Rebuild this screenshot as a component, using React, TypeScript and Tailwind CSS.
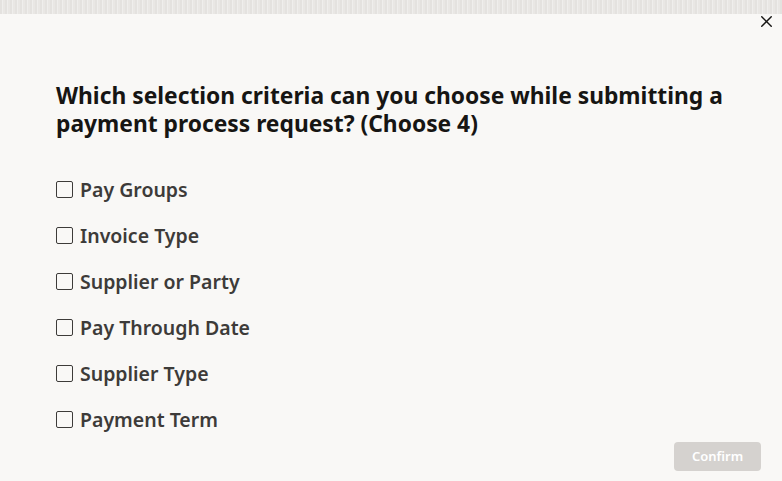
import { X } from 'lucide-react'

const options = ['Pay Groups', 'Invoice Type', 'Supplier or Party', 'Pay Through Date', 'Supplier Type', 'Payment Term']

export default function App() {
  return (
    <div className="w-[782px] h-[481px] bg-[#f9f8f6] flex flex-col overflow-hidden" style={{ fontFamily: '"Noto Sans", "Open Sans", sans-serif' }}>
      <div className="h-[14px] shrink-0 bg-[repeating-linear-gradient(90deg,#e4e2df_0px,#e4e2df_2px,#efeeec_2px,#efeeec_3px,#e9e7e4_3px,#e9e7e4_5px)]" />
      <div className="flex justify-end pr-[6px] h-[30px]">
        <button type="button" className="text-[#161513] h-[14px] flex items-center">
          <X size={19} strokeWidth={1.8} />
        </button>
      </div>
      <div className="px-[56px] pt-[38px]">
        <h1 className="text-[22.8px] leading-[28px] font-bold text-[#161513]">
          Which selection criteria can you choose while submitting a payment process request? (Choose 4)
        </h1>
        <ul className="mt-[37px] flex flex-col gap-[17px]">
          {options.map(o => (
            <li key={o} className="flex items-center gap-[7px] h-[29px] text-[19.5px] font-semibold text-[#3d3b39]">
              <span className="w-[17px] h-[17px] border-[1.5px] border-[#3d3b39] rounded-[2px]" />
              {o}
            </li>
          ))}
        </ul>
      </div>
      <div className="flex-1" />
      <div className="flex justify-end pr-[21px] pb-[10px]">
        <button type="button" className="w-[87px] h-[29px] rounded-[4px] bg-[#d5d2cf] text-white text-[13px] font-semibold">
          Confirm
        </button>
      </div>
    </div>
  )
}
